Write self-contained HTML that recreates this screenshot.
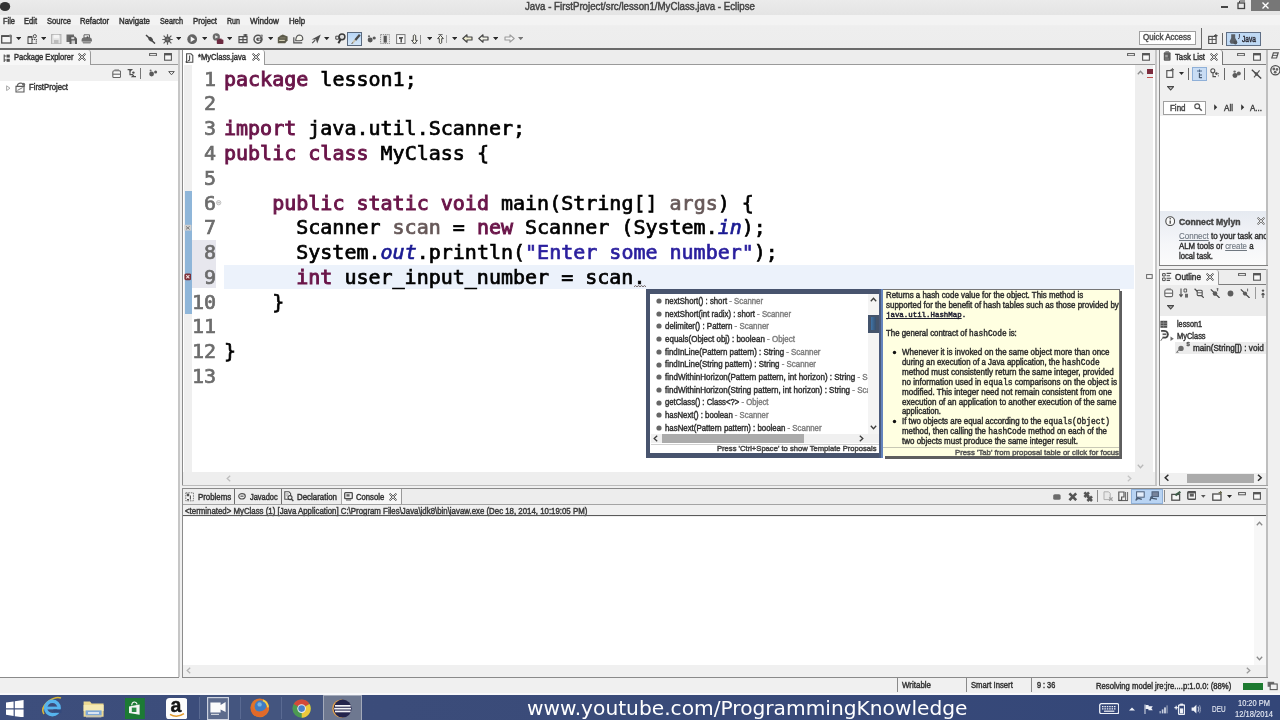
<!DOCTYPE html>
<html lang="en">
<head>
<meta charset="utf-8">
<title>Java - FirstProject/src/lesson1/MyClass.java - Eclipse</title>
<style>
html,body{margin:0;padding:0;}
body{width:1280px;height:720px;overflow:hidden;background:#f0f0f0;font-family:'Liberation Sans', 'DejaVu Sans', sans-serif;}
#root{will-change:transform;position:relative;width:1280px;height:720px;overflow:hidden;background:#f0f0f0;}
#root div,#root span.t,#root svg,#root pre{position:absolute;}
#root span.t{white-space:pre;-webkit-text-stroke:0.45px;}
#root pre{margin:0;}
pre.c{font-family:'DejaVu Sans Mono', 'Liberation Mono', monospace;font-size:20px;line-height:24.77px;color:#000;-webkit-text-stroke:0.7px #000;}
pre.n{width:36px;text-align:right;color:#6c6c6c;-webkit-text-stroke:0.7px #6c6c6c;}
.k{color:#6a1549;-webkit-text-stroke:0.95px #6a1549;}
.s{color:#2a1f9e;-webkit-text-stroke:0.7px #2a1f9e;}
.f{color:#1a1a92;font-style:italic;-webkit-text-stroke:0.7px #1a1a92;}
.v{color:#665858;-webkit-text-stroke:0.7px #665858;}
.g{color:#808080;}
.m{font-family:'Liberation Mono', 'DejaVu Sans Mono', monospace;}
</style>
</head>
<body>
<div id="root">
<div style="left:0px;top:0px;width:1280px;height:14.5px;background:linear-gradient(#ebebeb,#e4e4e4);"></div>
<div style="left:0px;top:14.5px;width:1280px;height:35.5px;background:linear-gradient(#f3f3f3 0%,#f3f3f3 27%,#eeeeee 31%,#ededed 100%);"></div>
<svg style="left:0px;top:1px;" width="11" height="11" viewBox="0 0 11 11"><ellipse cx="5" cy="5.5" rx="5.2" ry="4.6" fill="#333"/></svg>
<span id="t1" class="t" style="left:525px;top:0.2px;font-size:10px;line-height:14.0px;color:#444;transform:scaleX(0.9693);transform-origin:0 50%;">Java - FirstProject/src/lesson1/MyClass.java - Eclipse</span>
<div style="left:1250.5px;top:0px;width:29.5px;height:10.6px;background:#777;"></div>
<svg style="left:1261px;top:1px;" width="9" height="9" viewBox="0 0 9 9"><path d="M1.5 1.5L7.5 7.5M7.5 1.5L1.5 7.5" stroke="#fff" stroke-width="1.4"/></svg>
<div style="left:1221px;top:6px;width:7px;height:1.5px;background:#444;"></div>
<svg style="left:1237px;top:0px;" width="9" height="10" viewBox="0 0 9 10"><rect x="1" y="3" width="6.5" height="5.5" fill="none" stroke="#444" stroke-width="1.3"/><path d="M2.5 3V1H8" stroke="#444" fill="none" stroke-width="1"/></svg>
<span id="t2" class="t" style="left:3px;top:14.65px;font-size:8.8px;line-height:12.3px;color:#333333;transform:scaleX(0.8458);transform-origin:0 50%;">File</span>
<span id="t3" class="t" style="left:24px;top:14.65px;font-size:8.8px;line-height:12.3px;color:#333333;transform:scaleX(0.8568);transform-origin:0 50%;">Edit</span>
<span id="t4" class="t" style="left:47px;top:14.65px;font-size:8.8px;line-height:12.3px;color:#333333;transform:scaleX(0.861);transform-origin:0 50%;">Source</span>
<span id="t5" class="t" style="left:80px;top:14.65px;font-size:8.8px;line-height:12.3px;color:#333333;transform:scaleX(0.8722);transform-origin:0 50%;">Refactor</span>
<span id="t6" class="t" style="left:119px;top:14.65px;font-size:8.8px;line-height:12.3px;color:#333333;transform:scaleX(0.8925);transform-origin:0 50%;">Navigate</span>
<span id="t7" class="t" style="left:160px;top:14.65px;font-size:8.8px;line-height:12.3px;color:#333333;transform:scaleX(0.8251);transform-origin:0 50%;">Search</span>
<span id="t8" class="t" style="left:193px;top:14.65px;font-size:8.8px;line-height:12.3px;color:#333333;transform:scaleX(0.8762);transform-origin:0 50%;">Project</span>
<span id="t9" class="t" style="left:227px;top:14.65px;font-size:8.8px;line-height:12.3px;color:#333333;transform:scaleX(0.8054);transform-origin:0 50%;">Run</span>
<span id="t10" class="t" style="left:250px;top:14.65px;font-size:8.8px;line-height:12.3px;color:#333333;transform:scaleX(0.9266);transform-origin:0 50%;">Window</span>
<span id="t11" class="t" style="left:289px;top:14.65px;font-size:8.8px;line-height:12.3px;color:#333333;transform:scaleX(0.8843);transform-origin:0 50%;">Help</span>
<div style="left:0px;top:48px;width:1201px;height:2px;background:#6a6a6a;"></div>
<div style="left:1200.5px;top:27.5px;width:1.3px;height:22.5px;background:#6a6a6a;"></div>
<div style="left:1201px;top:48.9px;width:79px;height:1.2px;background:#7a7a7a;"></div>
<div style="left:1138.5px;top:31px;width:57.5px;height:13.5px;background:#fff;border:1px solid #a0a0a0;box-sizing:border-box;"></div>
<span id="t12" class="t" style="left:1143px;top:32.0px;font-size:8.4px;line-height:11.8px;color:#505050;transform:scaleX(0.9549);transform-origin:0 50%;">Quick Access</span>
<div style="left:1221.8px;top:33px;width:1.1px;height:12px;background:#666;"></div>
<div style="left:1225.8px;top:31.5px;width:35.4px;height:14.3px;background:#bfd9f4;border:1px solid #5f6f86;box-sizing:border-box;"></div>
<span id="t13" class="t" style="left:1242.3px;top:33.25px;font-size:8.8px;line-height:12.3px;color:#2e2e38;transform:scaleX(0.7476);transform-origin:0 50%;">Java</span>
<div style="left:0px;top:50px;width:179px;height:14.6px;background:#ededed;"></div>
<div style="left:0px;top:64px;width:179px;height:1px;background:#9a9a9a;"></div>
<div style="left:0px;top:50px;width:90px;height:15px;background:#f7f7f7;border-right:1px solid #999;border-radius:0 3px 0 0;"></div>
<span id="t14" class="t" style="left:13.6px;top:51.1px;font-size:8.8px;line-height:12.3px;color:#333333;transform:scaleX(0.8554);transform-origin:0 50%;">Package Explorer</span>
<div style="left:0px;top:65px;width:178px;height:15.5px;background:#f0f0f0;"></div>
<div style="left:0px;top:80.5px;width:178px;height:596.5px;background:#fff;"></div>
<div style="left:178.1px;top:50px;width:1.5px;height:627px;background:#c6c6c6;"></div>
<div style="left:0px;top:677px;width:179px;height:1px;background:#8a8a8a;"></div>
<span id="t15" class="t" style="left:29px;top:80.55px;font-size:8.8px;line-height:12.3px;color:#333333;transform:scaleX(0.8767);transform-origin:0 50%;">FirstProject</span>
<div style="left:182px;top:50px;width:974.8px;height:14.6px;background:#ededed;"></div>
<div style="left:182px;top:64px;width:974.8px;height:1px;background:#9a9a9a;"></div>
<div style="left:182px;top:50px;width:81.5px;height:15px;background:#fff;border-right:1px solid #999;border-radius:0 3px 0 0;"></div>
<span id="t16" class="t" style="left:198px;top:50.85px;font-size:8.8px;line-height:12.3px;color:#333333;transform:scaleX(0.8612);transform-origin:0 50%;">*MyClass.java</span>
<div style="left:182px;top:65px;width:974.8px;height:420px;background:#fff;"></div>
<div style="left:182px;top:50px;width:1px;height:436px;background:#8c8c8c;"></div>
<div style="left:1155.3px;top:50px;width:1.5px;height:436px;background:#c6c6c6;"></div>
<div style="left:182px;top:485px;width:974.8px;height:1px;background:#bcbcbc;"></div>
<div style="left:184px;top:65px;width:8px;height:407px;background:#efefef;"></div>
<div style="left:184.5px;top:190.5px;width:7.2px;height:123.5px;background:#8fb6d9;"></div>
<div style="left:191.7px;top:240px;width:24.3px;height:48px;background:#e7e7ee;"></div>
<div style="left:223.8px;top:264.6px;width:910.6px;height:24.3px;background:#ecf2fb;"></div>
<div style="left:1134.5px;top:65px;width:18.5px;height:420px;background:#eeeeee;"></div>
<div style="left:183px;top:472px;width:972px;height:13px;background:#eeeeee;"></div>
<div style="left:1147px;top:68.8px;width:5.5px;height:5.6px;background:#7c2b3c;"></div>
<div style="left:1146.5px;top:76.5px;width:6.5px;height:1px;background:#c0504d;"></div>
<pre class="c" style="left:224px;top:66.7px;"><span class="k">package</span> lesson1;</pre>
<pre class="c n" style="left:180px;top:66.7px;">1</pre>
<pre class="c n" style="left:180px;top:91.47px;">2</pre>
<pre class="c" style="left:224px;top:116.24px;"><span class="k">import</span> java.util.Scanner;</pre>
<pre class="c n" style="left:180px;top:116.24px;">3</pre>
<pre class="c" style="left:224px;top:141.01px;"><span class="k">public</span> <span class="k">class</span> MyClass {</pre>
<pre class="c n" style="left:180px;top:141.01px;">4</pre>
<pre class="c n" style="left:180px;top:165.78px;">5</pre>
<pre class="c" style="left:224px;top:190.55px;">    <span class="k">public</span> <span class="k">static</span> <span class="k">void</span> main(String[] <span class="v">args</span>) {</pre>
<pre class="c n" style="left:180px;top:190.55px;">6</pre>
<pre class="c" style="left:224px;top:215.32px;">      Scanner <span class="v">scan</span> = <span class="k">new</span> Scanner (System.<span class="f">in</span>);</pre>
<pre class="c n" style="left:180px;top:215.32px;">7</pre>
<pre class="c" style="left:224px;top:240.09px;">      System.<span class="f">out</span>.println(<span class="s">"Enter some number"</span>);</pre>
<pre class="c n" style="left:180px;top:240.09px;">8</pre>
<pre class="c" style="left:224px;top:264.86px;">      <span class="k">int</span> user_input_number = scan.</pre>
<pre class="c n" style="left:180px;top:264.86px;">9</pre>
<pre class="c" style="left:224px;top:289.63px;">    }</pre>
<pre class="c n" style="left:180px;top:289.63px;">10</pre>
<pre class="c n" style="left:180px;top:314.4px;">11</pre>
<pre class="c" style="left:224px;top:339.17px;">}</pre>
<pre class="c n" style="left:180px;top:339.17px;">12</pre>
<pre class="c n" style="left:180px;top:363.94px;">13</pre>
<div style="left:645.6px;top:289.0px;width:237.29999999999995px;height:168.7px;background:#48546e;"></div>
<div style="left:879px;top:289.0px;width:2px;height:168.7px;background:#4a5a7c;"></div>
<div style="left:881px;top:289.0px;width:1.9px;height:168.7px;background:#6484bc;"></div>
<div style="left:650.3px;top:293.9px;width:228.7px;height:159.1px;background:#fff;"></div>
<svg style="left:655.5px;top:298.0px;" width="6" height="6" viewBox="0 0 6 6"><circle cx="3" cy="3" r="2.6" fill="#666"/></svg>
<span id="t17" class="t" style="left:665px;top:294.85px;font-size:8.8px;line-height:12.3px;color:#333;transform:scaleX(0.8829);transform-origin:0 50%;">nextShort() : short<span class="g"> - Scanner</span></span>
<svg style="left:655.5px;top:310.7px;" width="6" height="6" viewBox="0 0 6 6"><circle cx="3" cy="3" r="2.6" fill="#666"/></svg>
<span id="t18" class="t" style="left:665px;top:307.55px;font-size:8.8px;line-height:12.3px;color:#333;transform:scaleX(0.8886);transform-origin:0 50%;">nextShort(int radix) : short<span class="g"> - Scanner</span></span>
<svg style="left:655.5px;top:323.4px;" width="6" height="6" viewBox="0 0 6 6"><circle cx="3" cy="3" r="2.6" fill="#666"/></svg>
<span id="t19" class="t" style="left:665px;top:320.25px;font-size:8.8px;line-height:12.3px;color:#333;transform:scaleX(0.9013);transform-origin:0 50%;">delimiter() : Pattern<span class="g"> - Scanner</span></span>
<svg style="left:655.5px;top:336.1px;" width="6" height="6" viewBox="0 0 6 6"><circle cx="3" cy="3" r="2.6" fill="#666"/></svg>
<span id="t20" class="t" style="left:665px;top:332.95px;font-size:8.8px;line-height:12.3px;color:#333;transform:scaleX(0.9073);transform-origin:0 50%;">equals(Object obj) : boolean<span class="g"> - Object</span></span>
<svg style="left:655.5px;top:348.8px;" width="6" height="6" viewBox="0 0 6 6"><circle cx="3" cy="3" r="2.6" fill="#666"/></svg>
<span id="t21" class="t" style="left:665px;top:345.65px;font-size:8.8px;line-height:12.3px;color:#333;transform:scaleX(0.8982);transform-origin:0 50%;">findInLine(Pattern pattern) : String<span class="g"> - Scanner</span></span>
<svg style="left:655.5px;top:361.5px;" width="6" height="6" viewBox="0 0 6 6"><circle cx="3" cy="3" r="2.6" fill="#666"/></svg>
<span id="t22" class="t" style="left:665px;top:358.35px;font-size:8.8px;line-height:12.3px;color:#333;transform:scaleX(0.9002);transform-origin:0 50%;">findInLine(String pattern) : String<span class="g"> - Scanner</span></span>
<svg style="left:655.5px;top:374.2px;" width="6" height="6" viewBox="0 0 6 6"><circle cx="3" cy="3" r="2.6" fill="#666"/></svg>
<span id="t23" class="t" style="left:665px;top:371.05px;font-size:8.8px;line-height:12.3px;color:#333;transform:scaleX(0.9111);transform-origin:0 50%;">findWithinHorizon(Pattern pattern, int horizon) : String<span class="g"> - Scanner</span></span>
<svg style="left:655.5px;top:386.9px;" width="6" height="6" viewBox="0 0 6 6"><circle cx="3" cy="3" r="2.6" fill="#666"/></svg>
<span id="t24" class="t" style="left:665px;top:383.75px;font-size:8.8px;line-height:12.3px;color:#333;transform:scaleX(0.9097);transform-origin:0 50%;">findWithinHorizon(String pattern, int horizon) : String<span class="g"> - Scanner</span></span>
<svg style="left:655.5px;top:399.6px;" width="6" height="6" viewBox="0 0 6 6"><circle cx="3" cy="3" r="2.6" fill="#666"/></svg>
<span id="t25" class="t" style="left:665px;top:396.45px;font-size:8.8px;line-height:12.3px;color:#333;transform:scaleX(0.8783);transform-origin:0 50%;">getClass() : Class&lt;?&gt;<span class="g"> - Object</span></span>
<svg style="left:655.5px;top:412.3px;" width="6" height="6" viewBox="0 0 6 6"><circle cx="3" cy="3" r="2.6" fill="#666"/></svg>
<span id="t26" class="t" style="left:665px;top:409.15px;font-size:8.8px;line-height:12.3px;color:#333;transform:scaleX(0.8818);transform-origin:0 50%;">hasNext() : boolean<span class="g"> - Scanner</span></span>
<svg style="left:655.5px;top:425.0px;" width="6" height="6" viewBox="0 0 6 6"><circle cx="3" cy="3" r="2.6" fill="#666"/></svg>
<span id="t27" class="t" style="left:665px;top:421.85px;font-size:8.8px;line-height:12.3px;color:#333;transform:scaleX(0.892);transform-origin:0 50%;">hasNext(Pattern pattern) : boolean<span class="g"> - Scanner</span></span>
<div style="left:879px;top:289.0px;width:2px;height:168.7px;background:#4a5a7c;"></div>
<div style="left:881px;top:289.0px;width:1.9px;height:168.7px;background:#6484bc;"></div>
<div style="left:868px;top:293.8px;width:10.8px;height:140px;background:#f4f4f4;"></div>
<div style="left:868px;top:315px;width:10.5px;height:17.5px;background:#44546c;"></div>
<div style="left:650.6px;top:433.8px;width:228.2px;height:9.4px;background:#f0f0f0;"></div>
<div style="left:662px;top:434.2px;width:142px;height:8.4px;background:#ababab;"></div>
<div style="left:650.6px;top:444.3px;width:228.2px;height:1px;background:#d0d0d0;"></div>
<span id="t28" class="t" style="left:717px;top:444.0px;font-size:7.6px;line-height:10.6px;color:#444;transform:scaleX(1.0023);transform-origin:0 50%;">Press 'Ctrl+Space' to show Template Proposals</span>
<div style="left:884.5px;top:291px;width:237px;height:168px;background:#5e5e5e;"></div>
<div style="left:882.6px;top:289.3px;width:237px;height:167px;background:#ffffe1;border-top:1px solid #767676;box-sizing:border-box;"></div>
<div style="left:1119px;top:289.3px;width:1px;height:167.0px;background:#767676;"></div>
<span id="t29" class="t" style="left:885.9px;top:289.15px;font-size:8.8px;line-height:12.3px;color:#2e2e2e;transform:scaleX(0.8964);transform-origin:0 50%;">Returns a hash code value for the object. This method is</span>
<span id="t30" class="t" style="left:885.9px;top:299.35px;font-size:8.8px;line-height:12.3px;color:#2e2e2e;transform:scaleX(0.905);transform-origin:0 50%;">supported for the benefit of hash tables such as those provided by</span>
<span id="t31" class="t" style="left:885.9px;top:327.35px;font-size:8.8px;line-height:12.3px;color:#2e2e2e;transform:scaleX(0.8934);transform-origin:0 50%;">The general contract of <span class="m">hashCode</span> is:</span>
<span id="t32" class="t" style="left:902px;top:346.25px;font-size:8.8px;line-height:12.3px;color:#2e2e2e;transform:scaleX(0.9067);transform-origin:0 50%;">Whenever it is invoked on the same object more than once</span>
<span id="t33" class="t" style="left:902px;top:356.05px;font-size:8.8px;line-height:12.3px;color:#2e2e2e;transform:scaleX(0.8936);transform-origin:0 50%;">during an execution of a Java application, the <span class="m">hashCode</span></span>
<span id="t34" class="t" style="left:902px;top:365.95px;font-size:8.8px;line-height:12.3px;color:#2e2e2e;transform:scaleX(0.9177);transform-origin:0 50%;">method must consistently return the same integer, provided</span>
<span id="t35" class="t" style="left:902px;top:375.85px;font-size:8.8px;line-height:12.3px;color:#2e2e2e;transform:scaleX(0.9164);transform-origin:0 50%;">no information used in <span class="m">equals</span> comparisons on the object is</span>
<span id="t36" class="t" style="left:902px;top:385.75px;font-size:8.8px;line-height:12.3px;color:#2e2e2e;transform:scaleX(0.9163);transform-origin:0 50%;">modified. This integer need not remain consistent from one</span>
<span id="t37" class="t" style="left:902px;top:395.65px;font-size:8.8px;line-height:12.3px;color:#2e2e2e;transform:scaleX(0.9137);transform-origin:0 50%;">execution of an application to another execution of the same</span>
<span id="t38" class="t" style="left:902px;top:405.45px;font-size:8.8px;line-height:12.3px;color:#2e2e2e;transform:scaleX(0.8761);transform-origin:0 50%;">application.</span>
<span id="t39" class="t" style="left:902px;top:415.35px;font-size:8.8px;line-height:12.3px;color:#2e2e2e;transform:scaleX(0.8971);transform-origin:0 50%;">If two objects are equal according to the <span class="m">equals(Object)</span></span>
<span id="t40" class="t" style="left:902px;top:425.35px;font-size:8.8px;line-height:12.3px;color:#2e2e2e;transform:scaleX(0.8988);transform-origin:0 50%;">method, then calling the <span class="m">hashCode</span> method on each of the</span>
<span id="t41" class="t" style="left:902px;top:435.15px;font-size:8.8px;line-height:12.3px;color:#2e2e2e;transform:scaleX(0.9066);transform-origin:0 50%;">two objects must produce the same integer result.</span>
<span id="t42" class="t" style="left:885.9px;top:310.4px;font-size:7.6px;line-height:10.6px;color:#223;font-family:'Liberation Mono', 'DejaVu Sans Mono', monospace;transform:scaleX(0.9763);transform-origin:0 50%;"><span style="text-decoration:underline">java.util.HashMap</span>.</span>
<svg style="left:891.5px;top:350.2px;" width="5" height="5" viewBox="0 0 5 5"><circle cx="2.5" cy="2.5" r="1.7" fill="#111"/></svg>
<svg style="left:891.5px;top:419.3px;" width="5" height="5" viewBox="0 0 5 5"><circle cx="2.5" cy="2.5" r="1.7" fill="#111"/></svg>
<div style="left:883px;top:447px;width:236px;height:1px;background:#c8c8b4;"></div>
<span id="t43" class="t" style="left:954.5px;top:448.2px;font-size:7.6px;line-height:10.6px;color:#555;transform:scaleX(1.0202);transform-origin:0 50%;">Press 'Tab' from proposal table or click for focus</span>
<div style="left:1159px;top:50px;width:108.90000000000009px;height:14.6px;background:#ededed;"></div>
<div style="left:1159px;top:64px;width:108.9px;height:1px;background:#7e7e7e;"></div>
<div style="left:1159px;top:50px;width:63.2px;height:15px;background:#f7f7f7;border-right:1px solid #777;border-radius:0 3px 0 0;"></div>
<span id="t44" class="t" style="left:1175px;top:51.35px;font-size:8.8px;line-height:12.3px;color:#333333;transform:scaleX(0.8763);transform-origin:0 50%;">Task List</span>
<div style="left:1159px;top:65px;width:108.90000000000009px;height:51px;background:#f0f0f0;"></div>
<div style="left:1159px;top:116px;width:108.90000000000009px;height:95px;background:#fff;"></div>
<div style="left:1159px;top:211px;width:108.90000000000009px;height:54px;background:linear-gradient(#e6eaf1,#f5f6f9 60%,#fbfbfb);"></div>
<div style="left:1159px;top:50px;width:1px;height:216px;background:#8c8c8c;"></div>
<div style="left:1266.3px;top:50px;width:1.6px;height:216px;background:#bebebe;"></div>
<div style="left:1159px;top:265px;width:108.9px;height:1px;background:#808080;"></div>
<div style="left:1192px;top:67px;width:14.5px;height:13.5px;background:#c9ddf4;border:1px solid #8fb0d8;box-sizing:border-box;"></div>
<div style="left:1187.6px;top:67.5px;width:1.3px;height:12.5px;background:#686868;"></div>
<div style="left:1223.8px;top:67.5px;width:1.3px;height:12.5px;background:#686868;"></div>
<div style="left:1244.2px;top:67.5px;width:1.3px;height:12.5px;background:#686868;"></div>
<div style="left:1163px;top:101px;width:42.5px;height:13.5px;background:#fff;border:1px solid #a0a0a0;box-sizing:border-box;"></div>
<span id="t45" class="t" style="left:1170px;top:101.65px;font-size:8.8px;line-height:12.3px;color:#444;transform:scaleX(0.9051);transform-origin:0 50%;">Find</span>
<span id="t46" class="t" style="left:1224px;top:101.65px;font-size:8.8px;line-height:12.3px;color:#444;transform:scaleX(0.9201);transform-origin:0 50%;">All</span>
<span id="t47" class="t" style="left:1250px;top:101.65px;font-size:8.8px;line-height:12.3px;color:#444;transform:scaleX(0.9089);transform-origin:0 50%;">A...</span>
<span id="t48" class="t" style="left:1178.5px;top:214.6px;font-size:9.6px;line-height:13.4px;color:#444;font-weight:bold;transform:scaleX(0.9013);transform-origin:0 50%;">Connect Mylyn</span>
<span id="t49" class="t" style="left:1178.5px;top:230.05px;font-size:8.8px;line-height:12.3px;color:#333;transform:scaleX(0.9068);transform-origin:0 50%;"><span style="text-decoration:underline;color:#6f7780;-webkit-text-stroke:0.15px">Connect</span> to your task and</span>
<div style="left:1266.3px;top:228px;width:1.6px;height:14px;background:#bebebe;"></div>
<div style="left:1267.9px;top:228px;width:0.7px;height:14px;background:#f0f0f0;"></div>
<span id="t50" class="t" style="left:1178.5px;top:240.05px;font-size:8.8px;line-height:12.3px;color:#333;transform:scaleX(0.8909);transform-origin:0 50%;">ALM tools or <span style="text-decoration:underline;color:#6f7780;-webkit-text-stroke:0.15px">create</span> a</span>
<span id="t51" class="t" style="left:1178.5px;top:249.55px;font-size:8.8px;line-height:12.3px;color:#333;transform:scaleX(0.869);transform-origin:0 50%;">local task.</span>
<div style="left:1159px;top:268.8px;width:108.90000000000009px;height:15px;background:#ededed;"></div>
<div style="left:1159px;top:268.8px;width:108.9px;height:1px;background:#8a8a8a;"></div>
<div style="left:1159px;top:284px;width:108.9px;height:1px;background:#7c7c7c;"></div>
<div style="left:1159px;top:269.5px;width:58.5px;height:15px;background:#f7f7f7;border-right:1px solid #999;border-radius:0 3px 0 0;"></div>
<span id="t52" class="t" style="left:1175px;top:270.6px;font-size:8.8px;line-height:12.3px;color:#333333;transform:scaleX(0.9327);transform-origin:0 50%;">Outline</span>
<div style="left:1159px;top:284.5px;width:108.90000000000009px;height:31.5px;background:#ececec;"></div>
<div style="left:1159px;top:316px;width:108.90000000000009px;height:156.5px;background:#fff;"></div>
<div style="left:1159px;top:472.5px;width:108.90000000000009px;height:12.5px;background:#f0f0f0;"></div>
<div style="left:1187px;top:473.5px;width:66.8px;height:9.5px;background:#ababab;"></div>
<div style="left:1159px;top:268.8px;width:1px;height:217.2px;background:#8c8c8c;"></div>
<div style="left:1266.3px;top:268.8px;width:1.6px;height:217.2px;background:#bebebe;"></div>
<div style="left:1159px;top:485px;width:108.9px;height:1px;background:#a0a0a0;"></div>
<div style="left:1175px;top:342px;width:90.5px;height:11.8px;background:#ececec;"></div>
<span id="t53" class="t" style="left:1177px;top:317.65px;font-size:8.8px;line-height:12.3px;color:#333333;transform:scaleX(0.8243);transform-origin:0 50%;">lesson1</span>
<span id="t54" class="t" style="left:1177px;top:329.55px;font-size:8.8px;line-height:12.3px;color:#333333;transform:scaleX(0.8478);transform-origin:0 50%;">MyClass</span>
<span id="t55" class="t" style="left:1193px;top:341.85px;font-size:8.8px;line-height:12.3px;color:#333333;transform:scaleX(0.9283);transform-origin:0 50%;">main(String[]) : void</span>
<div style="left:1255px;top:287px;width:1px;height:12px;background:#999;"></div>
<div style="left:182px;top:488px;width:1085.9px;height:16px;background:#ededed;"></div>
<div style="left:182px;top:488px;width:1085.9px;height:1px;background:#8a8a8a;"></div>
<div style="left:182px;top:503.5px;width:1085.9px;height:1px;background:#a4a4a4;"></div>
<div style="left:340.5px;top:488.8px;width:61px;height:15.2px;background:#f7f7f7;border-right:1px solid #999;border-left:1px solid #aaa;box-sizing:border-box;"></div>
<div style="left:234px;top:489px;width:1px;height:14.6px;background:#6e6e6e;"></div>
<div style="left:281px;top:489px;width:1px;height:14.6px;background:#6e6e6e;"></div>
<span id="t56" class="t" style="left:197.8px;top:490.9px;font-size:8.8px;line-height:12.3px;color:#333333;transform:scaleX(0.8935);transform-origin:0 50%;">Problems</span>
<span id="t57" class="t" style="left:250.3px;top:490.9px;font-size:8.8px;line-height:12.3px;color:#333333;transform:scaleX(0.8454);transform-origin:0 50%;">Javadoc</span>
<span id="t58" class="t" style="left:296.7px;top:490.9px;font-size:8.8px;line-height:12.3px;color:#333333;transform:scaleX(0.8989);transform-origin:0 50%;">Declaration</span>
<span id="t59" class="t" style="left:356.3px;top:490.9px;font-size:8.8px;line-height:12.3px;color:#333333;transform:scaleX(0.8736);transform-origin:0 50%;">Console</span>
<div style="left:182px;top:504.5px;width:1085.9px;height:11px;background:#f0f0f0;"></div>
<span id="t60" class="t" style="left:184.7px;top:504.5px;font-size:8.6px;line-height:12.0px;color:#3a3a3a;transform:scaleX(0.9135);transform-origin:0 50%;">&lt;terminated&gt; MyClass (1) [Java Application] C:\Program Files\Java\jdk8\bin\javaw.exe (Dec 18, 2014, 10:19:05 PM)</span>
<div style="left:182px;top:515.1px;width:1083.5px;height:1.2px;background:#5a5a5a;"></div>
<div style="left:182px;top:516.6px;width:1085.9px;height:148px;background:#fff;"></div>
<div style="left:182px;top:664.5px;width:1085.9px;height:12.5px;background:#f0f0f0;"></div>
<div style="left:1253.5px;top:516.6px;width:13px;height:148px;background:#f7f7f7;"></div>
<div style="left:182px;top:488px;width:1px;height:190px;background:#8c8c8c;"></div>
<div style="left:1266.3px;top:488px;width:1.6px;height:190px;background:#bebebe;"></div>
<div style="left:182px;top:677px;width:1085.9px;height:1px;background:#8a8a8a;"></div>
<div style="left:1131px;top:489px;width:31.5px;height:14.6px;background:#b9d4f3;border:1px solid #8fb0d8;box-sizing:border-box;"></div>
<div style="left:1097px;top:490px;width:1px;height:12px;background:#8a8a8a;"></div>
<div style="left:1268.5px;top:50.1px;width:11.5px;height:644.5px;background:#f0f0f0;"></div>
<div style="left:0px;top:678px;width:1280px;height:17px;background:#f0f0f0;"></div>
<div style="left:896.5px;top:678px;width:1px;height:14px;background:#8a8a8a;"></div>
<div style="left:965.7px;top:678px;width:1px;height:14px;background:#8a8a8a;"></div>
<div style="left:1031px;top:678px;width:1px;height:14px;background:#8a8a8a;"></div>
<span id="t61" class="t" style="left:901.6px;top:679.05px;font-size:8.8px;line-height:12.3px;color:#333333;transform:scaleX(0.9032);transform-origin:0 50%;">Writable</span>
<span id="t62" class="t" style="left:971px;top:679.05px;font-size:8.8px;line-height:12.3px;color:#333333;transform:scaleX(0.8725);transform-origin:0 50%;">Smart Insert</span>
<span id="t63" class="t" style="left:1036.7px;top:679.05px;font-size:8.8px;line-height:12.3px;color:#333333;transform:scaleX(0.8267);transform-origin:0 50%;">9 : 36</span>
<span id="t64" class="t" style="left:1095.7px;top:680.35px;font-size:8.8px;line-height:12.3px;color:#333;transform:scaleX(0.8756);transform-origin:0 50%;">Resolving model jre:jre....p:1.0.0: (88%)</span>
<div style="left:1243px;top:683px;width:19.5px;height:6.5px;background:#1d7a30;"></div>
<div style="left:0px;top:692.6px;width:1280px;height:2.2px;background:#f8f8fa;"></div>
<div style="left:0px;top:694.7px;width:1280px;height:25.3px;background:linear-gradient(90deg,#3d4e7c 0%,#3a4b79 45%,#334678 100%);"></div>
<div style="left:200px;top:695px;width:123px;height:25px;background:#44557f;"></div>
<span id="t65" class="t" style="left:527px;top:693.65px;font-size:20.2px;line-height:28.3px;color:#fff;font-family:'DejaVu Sans', 'Liberation Sans', sans-serif;transform:scaleX(1.0);transform-origin:0 50%;-webkit-text-stroke:0;">www.youtube.com/ProgrammingKnowledge</span>
<span id="t66" class="t" style="left:1211.7px;top:702.8px;font-size:8.6px;line-height:12.0px;color:#e8ecf5;transform:scaleX(0.7491);transform-origin:0 50%;-webkit-text-stroke:0.12px;">DEU</span>
<span id="t67" class="t" style="left:1238.4px;top:697.9px;font-size:8.4px;line-height:11.8px;color:#e8ecf5;transform:scaleX(0.8896);transform-origin:0 50%;-webkit-text-stroke:0.12px;">10:20 PM</span>
<span id="t68" class="t" style="left:1235px;top:708.7px;font-size:8.4px;line-height:11.8px;color:#e8ecf5;transform:scaleX(0.9064);transform-origin:0 50%;-webkit-text-stroke:0.12px;">12/18/2014</span>
<svg style="left:1px;top:34.1px;" width="11" height="10" viewBox="0 0 11 10"><rect x="0.7" y="2" width="9.3" height="7" fill="#f4f4f4" stroke="#505050" stroke-width="1.3"/><rect x="0.3" y="1.2" width="10" height="1.8" fill="#505050"/><circle cx="9.3" cy="2" r="1.4" fill="#777"/></svg>
<svg style="left:15.7px;top:36.8px;" width="5.4" height="3.2" viewBox="0 0 5.4 3.2"><path d="M0 0H5.4L2.7 3.2Z" fill="#2a2a2a"/></svg>
<svg style="left:26.5px;top:33.6px;" width="10" height="10.5" viewBox="0 0 10 10.5"><path d="M1 3H5V9.5H1Z" fill="none" stroke="#505050" stroke-width="1.1"/><path d="M5 5.5H9.3V9.5H5" fill="none" stroke="#505050" stroke-width="1.1" stroke-dasharray="1.2 0.8"/><circle cx="7.8" cy="2.2" r="1.6" fill="none" stroke="#505050" stroke-width="1"/><rect x="1" y="2" width="4" height="1.6" fill="#505050"/></svg>
<svg style="left:40.7px;top:36.8px;" width="5.4" height="3.2" viewBox="0 0 5.4 3.2"><path d="M0 0H5.4L2.7 3.2Z" fill="#2a2a2a"/></svg>
<svg style="left:51px;top:33.6px;" width="10.5" height="10.5" viewBox="0 0 10.5 10.5"><rect x="0.6" y="0.6" width="9.3" height="9.3" fill="#e2e2e2" stroke="#b4b4b4" stroke-width="1.1"/><rect x="2.5" y="0.8" width="5.5" height="3.5" fill="#f4f4f4"/><rect x="3" y="6" width="4.5" height="4" fill="#bcbcbc"/></svg>
<svg style="left:66px;top:33.6px;" width="11.5" height="10.5" viewBox="0 0 11.5 10.5"><rect x="0.5" y="0.5" width="7.5" height="7.5" fill="#6a6a6a"/><path d="M3.5 2.5H9L11 4.5V10H3.5Z" fill="#5a5a5a"/><rect x="5.5" y="6.5" width="3.5" height="3.5" fill="#cfcfcf"/><rect x="5.3" y="3.2" width="3" height="2" fill="#ddd"/></svg>
<svg style="left:81px;top:34.1px;" width="11.5" height="10" viewBox="0 0 11.5 10"><path d="M3 0.8H8.5V4H3Z" fill="#f0f0f0" stroke="#666" stroke-width="1"/><path d="M0.6 6.2Q0.6 3.6 3 3.6H8.5Q10.9 3.6 10.9 6.2V7.4H0.6Z" fill="#707070"/><path d="M1.2 7.4H10.3L9.4 9.5H2.1Z" fill="#8a8a8a"/><circle cx="6.5" cy="3.3" r="1" fill="#555"/></svg>
<svg style="left:145px;top:33.6px;" width="11" height="10.5" viewBox="0 0 11 10.5"><path d="M1 1L10 9.6" stroke="#444" stroke-width="1.5"/><ellipse cx="5.6" cy="5.2" rx="2.6" ry="1.9" transform="rotate(42 5.6 5.2)" fill="#4a4a4a"/></svg>
<svg style="left:161.5px;top:33.6px;" width="11" height="11" viewBox="0 0 11 11"><circle cx="5.5" cy="5.5" r="3" fill="#555"/><path d="M5.5 0.3V10.7M0.3 5.5H10.7M1.6 1.6L9.4 9.4M9.4 1.6L1.6 9.4" stroke="#5a5a5a" stroke-width="1.2"/><circle cx="5.5" cy="5.5" r="1.1" fill="#8a8a8a"/></svg>
<svg style="left:176.0px;top:37.0px;" width="5.4" height="3.2" viewBox="0 0 5.4 3.2"><path d="M0 0H5.4L2.7 3.2Z" fill="#2a2a2a"/></svg>
<svg style="left:186.8px;top:33.6px;" width="10.4" height="10.4" viewBox="0 0 10.4 10.4"><circle cx="5.2" cy="5.2" r="4.9" fill="#646464"/><path d="M3.7 2.5L8 5.2L3.7 7.9Z" fill="#fafafa"/></svg>
<svg style="left:201.6px;top:37.0px;" width="5.4" height="3.2" viewBox="0 0 5.4 3.2"><path d="M0 0H5.4L2.7 3.2Z" fill="#2a2a2a"/></svg>
<svg style="left:212px;top:32.6px;" width="12" height="12" viewBox="0 0 12 12"><circle cx="4.3" cy="3.9" r="3.6" fill="#6a6a6a"/><path d="M3.2 2.2L6.3 3.9L3.2 5.6Z" fill="#e8e8e8"/><rect x="4.8" y="6.6" width="6.6" height="4.4" rx="0.8" fill="#6c2a40"/><rect x="6.6" y="5.6" width="3" height="1.4" fill="#6c2a40"/></svg>
<svg style="left:226.8px;top:37.0px;" width="5.4" height="3.2" viewBox="0 0 5.4 3.2"><path d="M0 0H5.4L2.7 3.2Z" fill="#2a2a2a"/></svg>
<svg style="left:237.5px;top:34.4px;" width="10" height="9.2" viewBox="0 0 10 9.2"><path d="M1 2.6H9V8.6H1Z" fill="none" stroke="#505050" stroke-width="1.2"/><path d="M5 2.6V8.6M1 5.6H9" stroke="#505050" stroke-width="1.2"/><path d="M5.5 1H9.3" stroke="#505050" stroke-width="1.6"/><path d="M7.4 0V3" stroke="#505050" stroke-width="1.1"/></svg>
<svg style="left:253px;top:34.2px;" width="10.4" height="10.2" viewBox="0 0 10.4 10.2"><circle cx="5" cy="5.2" r="4.7" fill="#555"/><path d="M6.9 3.6A2.5 2.5 0 1 0 6.9 6.8" fill="none" stroke="#f2f2f2" stroke-width="1.5"/><path d="M5.4 5.2H7.6" stroke="#f2f2f2" stroke-width="1.1"/><circle cx="8.6" cy="1.8" r="1.4" fill="#8a8a8a"/></svg>
<svg style="left:267.9px;top:37.0px;" width="5.4" height="3.2" viewBox="0 0 5.4 3.2"><path d="M0 0H5.4L2.7 3.2Z" fill="#2a2a2a"/></svg>
<svg style="left:277px;top:33.6px;" width="11.5" height="10" viewBox="0 0 11.5 10"><path d="M0.8 3.6L4.2 1.2L5.8 0.6L10.6 2.6V6.2L8.2 9.2H0.8Z" fill="#5c5a4a"/><path d="M2.2 6.4H7.8" stroke="#d8d4b8" stroke-width="1.1"/><path d="M3.2 3.9H8.6" stroke="#87846e" stroke-width="1"/></svg>
<svg style="left:293px;top:34.1px;" width="10.5" height="9.6" viewBox="0 0 10.5 9.6"><path d="M0.8 3.2V8.8H9.2" fill="none" stroke="#505050" stroke-width="1.2"/><path d="M2.8 5.6Q3.4 1 6.6 1Q9.8 1.4 9.8 5.2Q9 6.9 6.2 6.8H2.8Z" fill="#f2f2ea" stroke="#505050" stroke-width="1.1"/></svg>
<svg style="left:310.5px;top:33.6px;" width="10.4" height="10" viewBox="0 0 10.4 10"><path d="M9.8 0.4L6.2 9.4L5 5.6L0.6 5.4Z" fill="#505050"/><path d="M1.2 9.2L4.2 6.2" stroke="#505050" stroke-width="1.2"/></svg>
<svg style="left:324.3px;top:37.0px;" width="5.4" height="3.2" viewBox="0 0 5.4 3.2"><path d="M0 0H5.4L2.7 3.2Z" fill="#2a2a2a"/></svg>
<svg style="left:334.5px;top:33.2px;" width="11" height="11" viewBox="0 0 11 11"><path d="M0.8 3.2H3.8V6.2H0.8Z" fill="#f0f0f0" stroke="#444" stroke-width="1"/><circle cx="7" cy="3.8" r="2.9" fill="#dedede" stroke="#3c3c3c" stroke-width="1.5"/><path d="M5.6 6.2L3.4 10.2" stroke="#333" stroke-width="2"/></svg>
<div style="left:347.3px;top:32.1px;width:15.2px;height:13.6px;background:linear-gradient(#b8d6f6,#d3e6f8);border:1px solid #59697e;box-sizing:border-box;"></div>
<svg style="left:350.5px;top:33.8px;" width="10.5" height="10.5" viewBox="0 0 10.5 10.5"><path d="M1.2 9.6L4.6 5.4" stroke="#c9c2ae" stroke-width="1.7"/><path d="M4.4 6L8.8 0.8" stroke="#4c4c4c" stroke-width="2.3"/><path d="M0.6 10.2L1.6 8.4" stroke="#666" stroke-width="1"/></svg>
<svg style="left:366px;top:35.0px;" width="10.5" height="8.4" viewBox="0 0 10.5 8.4"><circle cx="4.2" cy="5" r="2.5" fill="#575757"/><circle cx="8.2" cy="3" r="1.6" fill="#5a5a5a"/><circle cx="3" cy="1.3" r="1.1" fill="#6a6a6a"/></svg>
<svg style="left:380px;top:33.8px;" width="10.4" height="10.2" viewBox="0 0 10.4 10.2"><rect x="0.6" y="0.6" width="9.2" height="9" fill="#e6e6e6" stroke="#8c8c8c" stroke-width="1" stroke-dasharray="1.4 0.8"/><rect x="3.6" y="1.8" width="3.2" height="6.8" fill="#555"/></svg>
<svg style="left:396px;top:33.8px;" width="9.6" height="10.2" viewBox="0 0 9.6 10.2"><rect x="0.6" y="0.6" width="8.4" height="9" fill="#f6f6f6" stroke="#777" stroke-width="1"/><path d="M3 3H7V4.4H6V8.4H4.4V5H3Z" fill="#555"/></svg>
<svg style="left:410.6px;top:33.6px;" width="7" height="10.5" viewBox="0 0 7 10.5"><path d="M3.5 9.8L0.6 6.4H2.3V1.6Q3.5 0 4.7 1.6V6.4H6.4Z" fill="#f4f4e6" stroke="#484848" stroke-width="1"/><path d="M1.4 10H5.6" stroke="#555" stroke-width="0.9"/></svg>
<div style="left:420px;top:34.6px;width:1px;height:9px;background:#8c8c8c;"></div>
<svg style="left:426.5px;top:36.8px;" width="5.4" height="3.2" viewBox="0 0 5.4 3.2"><path d="M0 0H5.4L2.7 3.2Z" fill="#2a2a2a"/></svg>
<svg style="left:436.6px;top:34.0px;" width="7" height="10.2" viewBox="0 0 7 10.2"><path d="M3.5 1.4L0.6 4.6H2.3V8.8Q3.5 10.2 4.7 8.8V4.6H6.4Z" fill="#f4f4e6" stroke="#484848" stroke-width="1"/><path d="M1.4 0.6H5.6" stroke="#555" stroke-width="0.9"/></svg>
<div style="left:445.5px;top:34.6px;width:1px;height:8px;background:#aaa;"></div>
<svg style="left:451.8px;top:36.8px;" width="5.4" height="3.2" viewBox="0 0 5.4 3.2"><path d="M0 0H5.4L2.7 3.2Z" fill="#2a2a2a"/></svg>
<svg style="left:461.5px;top:34.2px;" width="11" height="9" viewBox="0 0 11 9"><path d="M0.8 4.5L5 0.8V3H10V6H5V8.2Z" fill="#f0eed2" stroke="#444" stroke-width="1.15" stroke-linejoin="round"/></svg>
<svg style="left:477.5px;top:34.2px;" width="11" height="9" viewBox="0 0 11 9"><path d="M0.8 4.5L5 0.8V3H10V6H5V8.2Z" fill="#f4f4ea" stroke="#444" stroke-width="1.15" stroke-linejoin="round"/></svg>
<svg style="left:492.8px;top:36.8px;" width="5.4" height="3.2" viewBox="0 0 5.4 3.2"><path d="M0 0H5.4L2.7 3.2Z" fill="#2a2a2a"/></svg>
<svg style="left:503.5px;top:34.2px;" width="11" height="9" viewBox="0 0 11 9"><path d="M10.2 4.5L6 0.8V3H1V6H6V8.2Z" fill="#f4f4f4" stroke="#9a9a9a" stroke-width="1.1" stroke-linejoin="round"/></svg>
<svg style="left:518.0px;top:36.8px;" width="5.4" height="3.2" viewBox="0 0 5.4 3.2"><path d="M0 0H5.4L2.7 3.2Z" fill="#777"/></svg>
<svg style="left:1207.5px;top:33.6px;" width="10" height="10.5" viewBox="0 0 10 10.5"><rect x="0.7" y="2.4" width="7.4" height="7.2" fill="#f4f4f4" stroke="#505050" stroke-width="1.2"/><path d="M0.7 5.4H8M4.2 2.4V9.6" stroke="#505050" stroke-width="1"/><path d="M6 1.6H9.6M7.8 0V3.4" stroke="#505050" stroke-width="1.1"/></svg>
<svg style="left:1229px;top:33.2px;" width="13" height="12" viewBox="0 0 13 12"><path d="M2.2 1.2H6.2V5L8.2 8.4L6.6 10.8H1.8L0.6 8.4L2.2 5Z" fill="#5a5f66"/><circle cx="6.4" cy="9.6" r="1.9" fill="#4d5257"/><path d="M10.4 1V4.6Q10.2 6 9 5.6" fill="none" stroke="#445" stroke-width="1"/></svg>
<svg style="left:2.5px;top:53.6px;" width="7.6" height="8.6" viewBox="0 0 7.6 8.6"><path d="M1.2 0.6V8M1.2 2H3.4M1.2 6H3.4" stroke="#505050" stroke-width="1.1" fill="none"/><rect x="3.6" y="0.6" width="3.2" height="3" fill="#505050"/><rect x="3.6" y="4.8" width="3.2" height="3" fill="#505050"/></svg>
<svg style="left:78px;top:53.3px;" width="8" height="8" viewBox="0 0 8 8"><path d="M1.3 0.4L4 3.1L6.7 0.4L7.6 1.3L4.9 4L7.6 6.7L6.7 7.6L4 4.9L1.3 7.6L0.4 6.7L3.1 4L0.4 1.3Z" fill="#f6f6f6" stroke="#4c4c4c" stroke-width="0.95" stroke-linejoin="round"/></svg>
<svg style="left:148.6px;top:52.8px;" width="8" height="3.4" viewBox="0 0 8 3.4"><rect x="0.6" y="0.6" width="6.8" height="2.2" fill="#f8f8f8" stroke="#555" stroke-width="1"/></svg>
<svg style="left:164.2px;top:52.8px;" width="8" height="8" viewBox="0 0 8 8"><rect x="0.6" y="0.6" width="6.8" height="6.6" fill="#f8f8f8" stroke="#555" stroke-width="1.1"/><rect x="0.6" y="0.4" width="6.8" height="2" fill="#555"/></svg>
<svg style="left:111.5px;top:68.6px;" width="9.4" height="9.4" viewBox="0 0 9.4 9.4"><rect x="0.8" y="1.8" width="7.8" height="6.8" rx="1.4" fill="#f8f8f8" stroke="#666" stroke-width="1.1"/><path d="M0.8 5.2H8.6" stroke="#666" stroke-width="1.1"/><path d="M2.4 0.8H7" stroke="#888" stroke-width="0.9"/></svg>
<svg style="left:126.5px;top:68px;" width="9.6" height="10.4" viewBox="0 0 9.6 10.4"><path d="M0.6 1.6H4.6L2.8 3.4" fill="none" stroke="#505050" stroke-width="1.2"/><path d="M3 2V6.6H6" fill="none" stroke="#505050" stroke-width="1.2"/><path d="M9 8.6H5.2L6.8 6.8" fill="none" stroke="#505050" stroke-width="1.2"/><circle cx="6.4" cy="4.6" r="1.2" fill="#505050"/></svg>
<div style="left:140px;top:68px;width:1.2px;height:11px;background:#777;"></div>
<svg style="left:147.5px;top:69.4px;" width="10" height="8" viewBox="0 0 10 8"><circle cx="3.6" cy="5" r="2.4" fill="#5a5a5a"/><circle cx="7.6" cy="3" r="1.5" fill="#5a5a5a"/><circle cx="2.6" cy="1.4" r="1" fill="#6c6c6c"/></svg>
<svg style="left:167.8px;top:70.6px;" width="7" height="4.6" viewBox="0 0 7 4.6"><path d="M0.7 0.6H6.3L3.5 3.8Z" fill="#f4f4f4" stroke="#555" stroke-width="1"/></svg>
<svg style="left:5.6px;top:85px;" width="5" height="6.4" viewBox="0 0 5 6.4"><path d="M0.6 0.8L4 3.2L0.6 5.6Z" fill="#fdfdfd" stroke="#a0a0a0" stroke-width="0.9"/></svg>
<svg style="left:14.5px;top:81.6px;" width="11" height="11" viewBox="0 0 11 11"><path d="M1 4.4H9V10H1Z" fill="#fafafa" stroke="#5a5a5a" stroke-width="1.1"/><path d="M2.2 4.2Q2.6 1 6 1.2Q9.4 1.6 9.6 4.6" fill="none" stroke="#666" stroke-width="1.2"/><path d="M2.4 8.4L7.6 5.6" stroke="#777" stroke-width="1"/><circle cx="8.6" cy="2.2" r="1.5" fill="#6e6e6e"/></svg>
<svg style="left:184.8px;top:53px;" width="8.8" height="10" viewBox="0 0 8.8 10"><path d="M1.6 0.8H6L7.8 2.6V9.2H1.6Z" fill="#fbfbfb" stroke="#4e4e4e" stroke-width="1.1"/><path d="M4.6 2.4V6.6Q4.4 8 3 7.4" fill="none" stroke="#4e4e4e" stroke-width="1.1"/><path d="M0.6 8.6L2.6 9.6" stroke="#444" stroke-width="1.2"/></svg>
<svg style="left:251.5px;top:53.1px;" width="8" height="8" viewBox="0 0 8 8"><path d="M1.3 0.4L4 3.1L6.7 0.4L7.6 1.3L4.9 4L7.6 6.7L6.7 7.6L4 4.9L1.3 7.6L0.4 6.7L3.1 4L0.4 1.3Z" fill="#f6f6f6" stroke="#4c4c4c" stroke-width="0.95" stroke-linejoin="round"/></svg>
<svg style="left:1127px;top:52.8px;" width="8" height="3.4" viewBox="0 0 8 3.4"><rect x="0.6" y="0.6" width="6.8" height="2.2" fill="#f8f8f8" stroke="#555" stroke-width="1"/></svg>
<svg style="left:1142.4px;top:52.8px;" width="8" height="8" viewBox="0 0 8 8"><rect x="0.6" y="0.6" width="6.8" height="6.6" fill="#f8f8f8" stroke="#555" stroke-width="1.1"/><rect x="0.6" y="0.4" width="6.8" height="2" fill="#555"/></svg>
<svg style="left:1137px;top:69.5px;" width="7" height="5" viewBox="0 0 7 5"><path d="M0.8 4.2L3.5 1.2L6.2 4.2" fill="none" stroke="#8c8c8c" stroke-width="1.3"/></svg>
<svg style="left:1137px;top:463.5px;" width="7" height="5" viewBox="0 0 7 5"><path d="M0.8 0.8L3.5 3.8L6.2 0.8" fill="none" stroke="#b8b8b8" stroke-width="1.3"/></svg>
<svg style="left:226px;top:474.5px;" width="5" height="7" viewBox="0 0 5 7"><path d="M4.2 0.8L1.2 3.5L4.2 6.2" fill="none" stroke="#bdbdbd" stroke-width="1.3"/></svg>
<svg style="left:1126.5px;top:474.5px;" width="5" height="7" viewBox="0 0 5 7"><path d="M0.8 0.8L3.8 3.5L0.8 6.2" fill="none" stroke="#c4c4c4" stroke-width="1.3"/></svg>
<svg style="left:183.8px;top:273.2px;" width="7.6" height="7.6" viewBox="0 0 7.6 7.6"><rect x="0.4" y="0.4" width="6.8" height="6.8" rx="1.6" fill="#7d3038"/><path d="M2.2 2.2L5.4 5.4M5.4 2.2L2.2 5.4" stroke="#f3dede" stroke-width="1.1"/></svg>
<svg style="left:183.6px;top:224.4px;" width="8" height="7.6" viewBox="0 0 8 7.6"><rect x="0.4" y="0.8" width="7" height="5.8" fill="#cfcfcf"/><path d="M2 2.4L5.6 5.4M5.6 2.4L2 5.4" stroke="#7a7a7a" stroke-width="1"/></svg>
<svg style="left:216.4px;top:200.4px;" width="5.4" height="5.4" viewBox="0 0 5.4 5.4"><circle cx="2.7" cy="2.7" r="2.2" fill="#eee" stroke="#b5b5b5" stroke-width="0.8"/><path d="M1.4 2.7H4" stroke="#aaa" stroke-width="0.8"/></svg>
<svg style="left:1145.6px;top:274px;" width="7" height="5.4" viewBox="0 0 7 5.4"><rect x="0.6" y="0.6" width="5.6" height="3.8" fill="#f8f8f8" stroke="#666" stroke-width="1"/></svg>
<svg style="left:634px;top:285.2px;" width="13" height="3" viewBox="0 0 13 3"><path d="M0 1.8L1.5 0.6L3 1.8L4.5 0.6L6 1.8L7.5 0.6L9 1.8L10.5 0.6L12 1.8" fill="none" stroke="#5e5252" stroke-width="0.9"/></svg>
<svg style="left:1163.2px;top:51.4px;" width="8.4" height="10.4" viewBox="0 0 8.4 10.4"><rect x="0.8" y="1.2" width="6.8" height="8.6" rx="1" fill="#5c5c5c"/><rect x="2.4" y="0.2" width="3.6" height="2" fill="#777"/><rect x="2.2" y="3.8" width="2.6" height="2.6" fill="#9c9c9c"/><path d="M2 8H6" stroke="#8c8c8c" stroke-width="0.9"/></svg>
<svg style="left:1210px;top:53.4px;" width="8" height="8" viewBox="0 0 8 8"><path d="M1.3 0.4L4 3.1L6.7 0.4L7.6 1.3L4.9 4L7.6 6.7L6.7 7.6L4 4.9L1.3 7.6L0.4 6.7L3.1 4L0.4 1.3Z" fill="#f6f6f6" stroke="#4c4c4c" stroke-width="0.95" stroke-linejoin="round"/></svg>
<svg style="left:1237.4px;top:52.8px;" width="8" height="3.4" viewBox="0 0 8 3.4"><rect x="0.6" y="0.6" width="6.8" height="2.2" fill="#f8f8f8" stroke="#555" stroke-width="1"/></svg>
<svg style="left:1252.8px;top:52.8px;" width="8" height="8" viewBox="0 0 8 8"><rect x="0.6" y="0.6" width="6.8" height="6.6" fill="#f8f8f8" stroke="#555" stroke-width="1.1"/><rect x="0.6" y="0.4" width="6.8" height="2" fill="#555"/></svg>
<svg style="left:1165.6px;top:68.2px;" width="8.6" height="10.2" viewBox="0 0 8.6 10.2"><rect x="0.8" y="2.6" width="6" height="6.8" fill="#f8f8f8" stroke="#5a5a5a" stroke-width="1.2"/><path d="M4.6 1.6H8.2M6.4 0V3.4" stroke="#666" stroke-width="1"/></svg>
<svg style="left:1179.0px;top:72.3px;" width="5" height="3" viewBox="0 0 5 3"><path d="M0 0H5L2.5 3Z" fill="#2a2a2a"/></svg>
<svg style="left:1194.6px;top:68.6px;" width="9" height="10" viewBox="0 0 9 10"><path d="M2 2H7M4.5 0.6V3.2" stroke="#4e6a8c" stroke-width="1.1"/><path d="M4.4 4V9M4.4 6H7M4.4 8.6H7" stroke="#44566e" stroke-width="1.1" fill="none"/></svg>
<svg style="left:1209.6px;top:68.4px;" width="10" height="10.4" viewBox="0 0 10 10.4"><circle cx="2.8" cy="2.8" r="2" fill="#f4f4f4" stroke="#505050" stroke-width="1.1"/><path d="M3 5V8.6H6" stroke="#505050" stroke-width="1.1" fill="none"/><circle cx="6.4" cy="5.6" r="1.3" fill="#505050"/><path d="M8.4 5V9" stroke="#777" stroke-width="1" stroke-dasharray="1 0.8"/></svg>
<svg style="left:1231.6px;top:69.6px;" width="9.6" height="9" viewBox="0 0 9.6 9"><circle cx="3" cy="5.4" r="2.5" fill="#5a5a5a"/><circle cx="6.8" cy="3.4" r="2" fill="#626262"/><circle cx="2.6" cy="1.6" r="1.2" fill="#6c6c6c"/></svg>
<svg style="left:1250.6px;top:68.6px;" width="11" height="10.4" viewBox="0 0 11 10.4"><path d="M0.8 0.8L10.2 9.6" stroke="#444" stroke-width="1.3"/><path d="M8.6 1.4L3 8.4" stroke="#555" stroke-width="1.1"/><ellipse cx="5.4" cy="5" rx="2.2" ry="1.4" transform="rotate(42 5.4 5)" fill="#555"/></svg>
<svg style="left:1167px;top:86.4px;" width="7.4" height="4.8" viewBox="0 0 7.4 4.8"><path d="M0.7 0.6H6.7L3.7 4Z" fill="#c8c8c8" stroke="#484848" stroke-width="1.1"/></svg>
<svg style="left:1194px;top:103.4px;" width="8.6" height="8.6" viewBox="0 0 8.6 8.6"><circle cx="3.2" cy="3.2" r="2.4" fill="#fff" stroke="#555" stroke-width="1.2"/><path d="M5 5L7.8 7.8" stroke="#555" stroke-width="1.5"/></svg>
<svg style="left:1214px;top:104.4px;" width="3.6" height="6.4" viewBox="0 0 3.6 6.4"><path d="M0.2 0.2L3.2 3.2L0.2 6.2Z" fill="#333"/></svg>
<svg style="left:1241px;top:104.4px;" width="3.6" height="6.4" viewBox="0 0 3.6 6.4"><path d="M0.2 0.2L3.2 3.2L0.2 6.2Z" fill="#333"/></svg>
<svg style="left:1164.6px;top:215.6px;" width="10.4" height="10.4" viewBox="0 0 10.4 10.4"><circle cx="5.2" cy="5.2" r="4.4" fill="#fafafa" stroke="#4c4c4c" stroke-width="1.1"/><path d="M5.2 4.4V7.8" stroke="#444" stroke-width="1.3"/><circle cx="5.2" cy="2.8" r="0.8" fill="#444"/></svg>
<svg style="left:1257.4px;top:217px;" width="8" height="8" viewBox="0 0 8 8"><path d="M1.3 0.4L4 3.1L6.7 0.4L7.6 1.3L4.9 4L7.6 6.7L6.7 7.6L4 4.9L1.3 7.6L0.4 6.7L3.1 4L0.4 1.3Z" fill="#f6f6f6" stroke="#666" stroke-width="0.95" stroke-linejoin="round"/></svg>
<svg style="left:1162px;top:272.4px;" width="9.6" height="9.6" viewBox="0 0 9.6 9.6"><path d="M0.6 1.6H3.2V4H0.6ZM0.6 6H3.2V8.6H0.6Z" fill="#f6f6f6" stroke="#505050" stroke-width="1"/><path d="M4.6 1.4H9.2M4.6 3.8H8M4.6 6.2H9.2M4.6 8.4H8" stroke="#505050" stroke-width="1.1"/></svg>
<svg style="left:1205.6px;top:273px;" width="8" height="8" viewBox="0 0 8 8"><path d="M1.3 0.4L4 3.1L6.7 0.4L7.6 1.3L4.9 4L7.6 6.7L6.7 7.6L4 4.9L1.3 7.6L0.4 6.7L3.1 4L0.4 1.3Z" fill="#f6f6f6" stroke="#4c4c4c" stroke-width="0.95" stroke-linejoin="round"/></svg>
<svg style="left:1237.6px;top:272.6px;" width="8" height="3.4" viewBox="0 0 8 3.4"><rect x="0.6" y="0.6" width="6.8" height="2.2" fill="#f8f8f8" stroke="#555" stroke-width="1"/></svg>
<svg style="left:1252.8px;top:272.6px;" width="8" height="8" viewBox="0 0 8 8"><rect x="0.6" y="0.6" width="6.8" height="6.6" fill="#f8f8f8" stroke="#555" stroke-width="1.1"/><rect x="0.6" y="0.4" width="6.8" height="2" fill="#555"/></svg>
<svg style="left:1164px;top:288.4px;" width="9.6" height="9.6" viewBox="0 0 9.6 9.6"><rect x="0.8" y="1.8" width="7.8" height="6.8" rx="1.4" fill="#f8f8f8" stroke="#666" stroke-width="1.1"/><path d="M0.8 5.2H8.6" stroke="#666" stroke-width="1.1"/><path d="M2.4 0.8H7" stroke="#888" stroke-width="0.9"/></svg>
<svg style="left:1178.6px;top:288.0px;" width="10" height="10.4" viewBox="0 0 10 10.4"><path d="M2 0.6V8.2M0.4 6.4L2 8.6L3.6 6.4" fill="none" stroke="#505050" stroke-width="1.1"/><path d="M5 1H7.6V4H5Z" fill="none" stroke="#505050" stroke-width="0.9"/><path d="M6 5.8H9V9.6H6Z" fill="#6a6a6a"/></svg>
<svg style="left:1194px;top:288.0px;" width="10.4" height="10.4" viewBox="0 0 10.4 10.4"><path d="M0.6 0.8L9.8 9.8" stroke="#444" stroke-width="1.2"/><rect x="3.2" y="2.2" width="5" height="5.4" rx="1" fill="#f2f2f2" stroke="#505050" stroke-width="1.1"/><path d="M3.4 4.8H8" stroke="#505050" stroke-width="0.9"/></svg>
<svg style="left:1210px;top:287.79999999999995px;" width="10.6" height="10.6" viewBox="0 0 10.6 10.6"><path d="M0.8 1.4L9.6 10" stroke="#444" stroke-width="1.2"/><circle cx="5" cy="5.6" r="2.3" fill="#5c5c5c"/><path d="M7.6 0.4V3.2M6.6 0.8H8.4" stroke="#555" stroke-width="0.9"/></svg>
<svg style="left:1226.6px;top:290.0px;" width="7" height="7" viewBox="0 0 7 7"><circle cx="3.5" cy="3.5" r="2.9" fill="#5e5e5e"/></svg>
<svg style="left:1240px;top:287.79999999999995px;" width="10.6" height="10.6" viewBox="0 0 10.6 10.6"><path d="M0.8 1.4L9.6 10" stroke="#444" stroke-width="1.2"/><circle cx="5" cy="5.6" r="2.1" fill="#5c5c5c"/><path d="M7.6 0.6V3.4" stroke="#555" stroke-width="0.9"/></svg>
<svg style="left:1261.4px;top:288.79999999999995px;" width="4" height="9" viewBox="0 0 4 9"><circle cx="2" cy="1.6" r="1.2" fill="#555"/><circle cx="2" cy="5.2" r="1.5" fill="#555"/><circle cx="2" cy="8" r="0.9" fill="#666"/></svg>
<svg style="left:1167px;top:305.4px;" width="7.4" height="4.8" viewBox="0 0 7.4 4.8"><path d="M0.7 0.6H6.7L3.7 4Z" fill="#b0b0b0" stroke="#484848" stroke-width="1.1"/></svg>
<svg style="left:1160.2px;top:319.6px;" width="8" height="8.6" viewBox="0 0 8 8.6"><path d="M0.4 0.8H7.2V7.8H0.4Z" fill="#505050"/><path d="M0.4 3.1H7.2M0.4 5.5H7.2" stroke="#bdbdbd" stroke-width="0.6"/><path d="M3.6 0.8V7.8" stroke="#9a9a9a" stroke-width="0.5"/></svg>
<svg style="left:1160px;top:330.4px;" width="10" height="11.4" viewBox="0 0 10 11.4"><path d="M1 1Q7.6 0 8 4.4Q7.6 8.4 2.6 7.4" fill="#f0f0f0" stroke="#444" stroke-width="1.7"/><path d="M2.6 4.2H6.4" stroke="#4a4a4a" stroke-width="1.4"/><path d="M3 7.4L0.8 10.8" stroke="#666" stroke-width="1"/></svg>
<svg style="left:1169.6px;top:336.4px;" width="4.6" height="5.6" viewBox="0 0 4.6 5.6"><path d="M0.5 0.6L3.8 2.8L0.5 5Z" fill="#6a6a6a"/></svg>
<svg style="left:1176.4px;top:343.6px;" width="9" height="9" viewBox="0 0 9 9"><circle cx="5" cy="4.4" r="2.7" fill="#6a6a6a"/><path d="M0.6 8.4L3 5.6" stroke="#666" stroke-width="1"/><path d="M0.4 8.4H2.6" stroke="#777" stroke-width="0.8"/></svg>
<span id="t69" class="t" style="left:1186.4px;top:341.2px;font-size:5px;line-height:7.0px;color:#555;font-weight:bold;">S</span>
<svg style="left:1163.6px;top:474.4px;" width="5.4" height="7.6" viewBox="0 0 5.4 7.6"><path d="M4.4 0.8L1.2 3.8L4.4 6.8" fill="none" stroke="#2e2e2e" stroke-width="1.5"/></svg>
<svg style="left:1257.4px;top:474.4px;" width="5.4" height="7.6" viewBox="0 0 5.4 7.6"><path d="M1 0.8L4.2 3.8L1 6.8" fill="none" stroke="#2e2e2e" stroke-width="1.5"/></svg>
<svg style="left:869.6px;top:297.4px;" width="7" height="5" viewBox="0 0 7 5"><path d="M0.8 4.2L3.5 1.2L6.2 4.2" fill="none" stroke="#3c3c3c" stroke-width="1.3"/></svg>
<svg style="left:869.6px;top:425px;" width="7" height="5" viewBox="0 0 7 5"><path d="M0.8 0.8L3.5 3.8L6.2 0.8" fill="none" stroke="#3c3c3c" stroke-width="1.3"/></svg>
<svg style="left:653.4px;top:434.6px;" width="5" height="7" viewBox="0 0 5 7"><path d="M4.2 0.8L1.2 3.5L4.2 6.2" fill="none" stroke="#3c3c3c" stroke-width="1.3"/></svg>
<svg style="left:858.8px;top:434.6px;" width="5" height="7" viewBox="0 0 5 7"><path d="M0.8 0.8L3.8 3.5L0.8 6.2" fill="none" stroke="#3c3c3c" stroke-width="1.3"/></svg>
<div style="left:870.6px;top:317.4px;width:5px;height:12.6px;background:linear-gradient(90deg,#3f74a8,#37506e);"></div>
<svg style="left:184.6px;top:491.6px;" width="9.6" height="10" viewBox="0 0 9.6 10"><rect x="0.8" y="0.8" width="7.6" height="8" fill="#f4f4f4" stroke="#777" stroke-width="1" stroke-dasharray="1.6 0.9"/><circle cx="3" cy="3" r="1.4" fill="#505050"/><path d="M5.4 3.6V7.6M2 7.6H4" stroke="#505050" stroke-width="1.1"/></svg>
<svg style="left:238.4px;top:493.4px;" width="8" height="6.6" viewBox="0 0 8 6.6"><ellipse cx="4" cy="3.3" rx="3.3" ry="2.7" fill="#f2f2f2" stroke="#555" stroke-width="1.2"/><path d="M2.4 3.2H5.6" stroke="#555" stroke-width="1.2"/></svg>
<svg style="left:284px;top:491.2px;" width="10" height="10.6" viewBox="0 0 10 10.6"><path d="M0.8 0.8H5L6.6 2.4V8.2H0.8Z" fill="#f8f8f8" stroke="#505050" stroke-width="1.1"/><circle cx="6" cy="6.6" r="2" fill="#f2f2f2" stroke="#444" stroke-width="1.1"/><path d="M7.4 8L9.4 10" stroke="#444" stroke-width="1.4"/><path d="M2.2 3H4.6M2.2 4.8H3.8" stroke="#777" stroke-width="0.8"/></svg>
<svg style="left:344px;top:492.2px;" width="9" height="8.6" viewBox="0 0 9 8.6"><rect x="0.7" y="0.7" width="7.6" height="6" rx="0.8" fill="#f2f2f2" stroke="#4e4e4e" stroke-width="1.3"/><rect x="2.4" y="2.2" width="3.2" height="2.4" fill="#666"/><path d="M2 8H7" stroke="#555" stroke-width="1"/></svg>
<svg style="left:389px;top:492.6px;" width="8" height="8" viewBox="0 0 8 8"><path d="M1.3 0.4L4 3.1L6.7 0.4L7.6 1.3L4.9 4L7.6 6.7L6.7 7.6L4 4.9L1.3 7.6L0.4 6.7L3.1 4L0.4 1.3Z" fill="#f6f6f6" stroke="#4c4c4c" stroke-width="0.95" stroke-linejoin="round"/></svg>
<svg style="left:1053px;top:493.6px;" width="8" height="6" viewBox="0 0 8 6"><rect x="0.2" y="0.2" width="7.4" height="5.6" rx="1.6" fill="#6c6c6c"/></svg>
<svg style="left:1068px;top:491.8px;" width="9.6" height="9.6" viewBox="0 0 9.6 9.6"><path d="M1.4 1.4L8.2 8.2M8.2 1.4L1.4 8.2" stroke="#555" stroke-width="2.6"/></svg>
<svg style="left:1082.6px;top:490.6px;" width="7.4" height="7.4" viewBox="0 0 7.4 7.4"><path d="M1.4 1.4L6.0 6.0M6.0 1.4L1.4 6.0" stroke="#555" stroke-width="2.6"/></svg>
<svg style="left:1086.4px;top:494.6px;" width="7.4" height="7.4" viewBox="0 0 7.4 7.4"><path d="M1.4 1.4L6.0 6.0M6.0 1.4L1.4 6.0" stroke="#555" stroke-width="2.6"/></svg>
<svg style="left:1103px;top:491.4px;" width="10.6" height="10.6" viewBox="0 0 10.6 10.6"><path d="M1 0.8H5.6L7.2 2.4V8.6H1Z" fill="#e8e8e8" stroke="#b0b0b0" stroke-width="1"/><path d="M6.2 6.4L9.6 9.8M9.6 6.4L6.2 9.8" stroke="#a0a0a0" stroke-width="1.3"/></svg>
<svg style="left:1118px;top:491.4px;" width="10.6" height="10.4" viewBox="0 0 10.6 10.4"><path d="M0.8 9.4V1H6V6H3.6V9.4Z" fill="#f2f2f2" stroke="#5a5a5a" stroke-width="1.2"/><path d="M7.6 1V9.4M9.6 1V9.4" stroke="#666" stroke-width="1"/><path d="M0.6 9.6H10" stroke="#555" stroke-width="1"/></svg>
<svg style="left:1134.6px;top:491.4px;" width="11" height="10.4" viewBox="0 0 11 10.4"><rect x="1.6" y="0.8" width="7.6" height="5.4" fill="#e4eefb" stroke="#4c5f7a" stroke-width="1"/><path d="M1 9.6Q1.4 6.4 3.6 7.4L6.8 8.4" fill="none" stroke="#44566c" stroke-width="1.3"/><circle cx="2.4" cy="7.4" r="1.3" fill="#50627a"/></svg>
<svg style="left:1149.4px;top:491.4px;" width="11" height="10.4" viewBox="0 0 11 10.4"><rect x="3" y="0.8" width="6.4" height="4.8" fill="#77839a" stroke="#4c5f7a" stroke-width="1"/><path d="M1 9.6Q1.4 6.4 3.6 7.4L8 8.2" fill="none" stroke="#44566c" stroke-width="1.3"/><circle cx="2.6" cy="6.6" r="1.5" fill="#50627a"/></svg>
<div style="left:1164px;top:490px;width:1px;height:12px;background:#8a8a8a;"></div>
<svg style="left:1170.6px;top:491.4px;" width="10.6" height="10" viewBox="0 0 10.6 10"><rect x="0.8" y="3.4" width="7.8" height="5.8" fill="#f6f6f6" stroke="#4e4e4e" stroke-width="1.3"/><path d="M4.4 4.4L9.4 0.8" stroke="#3e5c48" stroke-width="2.2"/></svg>
<svg style="left:1186.8px;top:490.6px;" width="9.6" height="9.6" viewBox="0 0 9.6 9.6"><rect x="0.8" y="0.8" width="8" height="7.4" rx="1" fill="#f2f2f2" stroke="#4e4e4e" stroke-width="1.4"/><rect x="2.8" y="2.6" width="4" height="3" fill="#5c5c5c"/><rect x="0.8" y="0.6" width="8" height="1.8" fill="#555"/></svg>
<svg style="left:1201.3px;top:495.2px;" width="4.6" height="2.8" viewBox="0 0 4.6 2.8"><path d="M0 0H4.6L2.3 2.8Z" fill="#555"/></svg>
<svg style="left:1211.6px;top:491.4px;" width="10.8" height="10" viewBox="0 0 10.8 10"><rect x="0.8" y="3" width="8.2" height="6.2" fill="#f8f8f8" stroke="#4e4e4e" stroke-width="1.3"/><path d="M6.6 1.6H10.4M8.6 0V3.4" stroke="#6b6b52" stroke-width="1.1"/></svg>
<svg style="left:1226.7px;top:495.1px;" width="5" height="3" viewBox="0 0 5 3"><path d="M0 0H5L2.5 3Z" fill="#2a2a2a"/></svg>
<svg style="left:1237.6px;top:492.4px;" width="8" height="3.4" viewBox="0 0 8 3.4"><rect x="0.6" y="0.6" width="6.8" height="2.2" fill="#f8f8f8" stroke="#555" stroke-width="1"/></svg>
<svg style="left:1252.8px;top:492.4px;" width="8" height="8" viewBox="0 0 8 8"><rect x="0.6" y="0.6" width="6.8" height="6.6" fill="#f8f8f8" stroke="#555" stroke-width="1.1"/><rect x="0.6" y="0.4" width="6.8" height="2" fill="#555"/></svg>
<svg style="left:1255.8px;top:521px;" width="7" height="5" viewBox="0 0 7 5"><path d="M0.8 4.2L3.5 1.2L6.2 4.2" fill="none" stroke="#8c8c8c" stroke-width="1.3"/></svg>
<svg style="left:1255.8px;top:656px;" width="7" height="5" viewBox="0 0 7 5"><path d="M0.8 0.8L3.5 3.8L6.2 0.8" fill="none" stroke="#8c8c8c" stroke-width="1.3"/></svg>
<svg style="left:185.6px;top:667px;" width="5" height="7" viewBox="0 0 5 7"><path d="M4.2 0.8L1.2 3.5L4.2 6.2" fill="none" stroke="#b4b4b4" stroke-width="1.3"/></svg>
<svg style="left:1245.6px;top:667px;" width="5" height="7" viewBox="0 0 5 7"><path d="M0.8 0.8L3.8 3.5L0.8 6.2" fill="none" stroke="#9a9a9a" stroke-width="1.3"/></svg>
<svg style="left:1270.6px;top:51.6px;" width="8" height="7" viewBox="0 0 8 7"><path d="M2.4 0.8H7.2L5.6 6H0.8Z" fill="#f2f2f2" stroke="#555" stroke-width="1.2"/><path d="M2 3.4H6.4" stroke="#555" stroke-width="0.9"/></svg>
<svg style="left:1269.6px;top:65.4px;" width="10.4" height="10.6" viewBox="0 0 10.4 10.6"><circle cx="5.4" cy="5.3" r="4.6" fill="#f4f4f4" stroke="#4e4e4e" stroke-width="1.3"/><circle cx="3.8" cy="4" r="1.4" fill="#666"/><circle cx="7" cy="4.4" r="1.3" fill="#666"/><circle cx="5.2" cy="7.2" r="1.4" fill="#666"/></svg>
<svg style="left:1266.6px;top:681.4px;" width="11" height="9.4" viewBox="0 0 11 9.4"><rect x="0.6" y="0.8" width="6.6" height="5" fill="#6a6a6a"/><rect x="3.2" y="3" width="7" height="5.6" fill="#f0f0f0" stroke="#5a5a5a" stroke-width="1.1"/></svg>
<svg style="left:6px;top:699.6px;" width="17.6" height="17.4" viewBox="0 0 17.6 17.4"><path d="M0 2.6L7.6 1.4V8.2H0ZM8.8 1.2L17.6 0V8.2H8.8ZM0 9.4H7.6V16L0 14.8ZM8.8 9.4H17.6V17.4L8.8 16.2Z" fill="#fff"/></svg>
<svg style="left:41px;top:696.4px;" width="22" height="22" viewBox="0 0 22 22"><path d="M3 18Q-1 12 8 5Q15 0 20 2" fill="none" stroke="#d9b83a" stroke-width="1.6"/><circle cx="11.4" cy="12" r="6.8" fill="none" stroke="#56b4ee" stroke-width="3.4"/><rect x="6" y="10.6" width="12" height="2.8" fill="#56b4ee"/><rect x="12.4" y="13.4" width="8" height="3.4" fill="#34497c"/></svg>
<svg style="left:83px;top:699.4px;" width="21.4" height="18.8" viewBox="0 0 21.4 18.8"><path d="M0.6 2.4H7L8.6 4.4H20.6V17.8H0.6Z" fill="#ecd992"/><rect x="0.6" y="6" width="20" height="6" fill="#f4e9b4"/><rect x="2.6" y="11.4" width="16" height="5" fill="#7fa8d8"/><rect x="5" y="13" width="11" height="2" fill="#d8e4f2"/><rect x="3" y="16.8" width="15.4" height="1.6" fill="#c9c4ae"/></svg>
<svg style="left:125.2px;top:697.6px;" width="19.8" height="21.6" viewBox="0 0 19.8 21.6"><rect width="19.8" height="21.6" fill="#1c7a34"/><path d="M4 8.4L14.6 6.6V16.8L4 15Z" fill="#f4f4f4"/><path d="M6.6 7.4Q7 3.8 9.6 4Q12 4.4 12 6.6" fill="none" stroke="#f4f4f4" stroke-width="1.1"/><rect x="6.8" y="9.6" width="4.6" height="4.4" fill="#2b8a44"/></svg>
<svg style="left:165.8px;top:697.8px;" width="21.6" height="21.4" viewBox="0 0 21.6 21.4"><rect width="21.6" height="21.4" rx="3.6" fill="#fcfcfc"/><path d="M4 16.4Q10.8 20.4 18 15.6" fill="none" stroke="#e39a2d" stroke-width="1.5"/></svg>
<span id="t70" class="t" style="left:170.6px;top:695.4px;font-size:19.5px;line-height:20px;color:#141414;font-weight:bold;">a</span>
<div style="left:199px;top:697px;width:1px;height:22px;background:#5a6a92;"></div>
<div style="left:240.4px;top:697px;width:1px;height:22px;background:#5a6a92;"></div>
<div style="left:280.6px;top:697px;width:1px;height:22px;background:#5a6a92;"></div>
<svg style="left:207px;top:697.2px;" width="22" height="22.8" viewBox="0 0 22 22.8"><rect x="0.6" y="0.6" width="20.8" height="22" fill="#5d6b8c" stroke="#d4d9e4" stroke-width="1.1"/><path d="M3.4 5.4H13.6V8L18.6 5V15L13.6 12.4V15.4H3.4Z" fill="#fbfbfb"/><path d="M4 17.4H12" stroke="#d0d4dc" stroke-width="1.2"/></svg>
<svg style="left:249.6px;top:698.4px;" width="19.6" height="19.6" viewBox="0 0 19.6 19.6"><circle cx="9.8" cy="9.8" r="9.4" fill="#e0742a"/><circle cx="10.6" cy="8.2" r="6" fill="#3f7dc4"/><path d="M1.4 7Q3 14 9.6 13.6Q15 13 16.6 8.6Q19 14 14 17.6Q8 20.4 3 16.4Q0 12.6 1.4 7Z" fill="#e2692a"/><path d="M13 2.4Q17.6 4.4 18 9.4" fill="none" stroke="#f4d34a" stroke-width="1.7"/><circle cx="9.6" cy="6.4" r="2.2" fill="#7ab4e2"/></svg>
<svg style="left:292.4px;top:699px;" width="19.2" height="19.2" viewBox="0 0 19.2 19.2"><circle cx="9.6" cy="9.6" r="9.2" fill="#4c9a52"/><path d="M9.6 9.6L1.7 4.9A9.2 9.2 0 0 1 17.5 4.9Z" fill="#d4493a"/><path d="M9.6 9.6L17.5 4.9A9.2 9.2 0 0 1 9.8 18.8Z" fill="#ecc93c"/><circle cx="9.6" cy="9.6" r="4.3" fill="#e9eef4"/><circle cx="9.6" cy="9.6" r="3.3" fill="#4a7fc8"/></svg>
<div style="left:323px;top:695.4px;width:39.2px;height:24.6px;background:#6e7890;border:1px solid #a3aaba;border-bottom:none;box-sizing:border-box;"></div>
<svg style="left:332.4px;top:698.6px;" width="20" height="19.4" viewBox="0 0 20 19.4"><circle cx="9.4" cy="9.6" r="9.2" fill="#e3a24a"/><circle cx="10.6" cy="9.6" r="9" fill="#23244c"/><rect x="3" y="6" width="15.6" height="1.7" fill="#f2f2f6"/><rect x="2.2" y="8.8" width="16.8" height="1.7" fill="#f2f2f6"/><rect x="3" y="11.6" width="15.6" height="1.7" fill="#f2f2f6"/></svg>
<svg style="left:1099px;top:703px;" width="20.4" height="11.4" viewBox="0 0 20.4 11.4"><rect x="0.7" y="0.7" width="19" height="10" rx="1.6" fill="none" stroke="#eef1f7" stroke-width="1.3"/><path d="M3 3.6H17.4M3 5.8H17.4" stroke="#eef1f7" stroke-width="1.2" stroke-dasharray="1.5 0.9"/><path d="M5 8.2H15.4" stroke="#eef1f7" stroke-width="1.2"/></svg>
<svg style="left:1128.6px;top:707px;" width="6" height="4" viewBox="0 0 6 4"><path d="M0 3.6L3 0.4L6 3.6Z" fill="#eef1f7"/></svg>
<svg style="left:1143.6px;top:703.6px;" width="9.6" height="10.4" viewBox="0 0 9.6 10.4"><path d="M1 0.4V10.4" stroke="#cfd5e2" stroke-width="1.1"/><path d="M1.6 1H4.6V2.2H8.8L7.4 4.2L8.8 6.2H4.4V5H1.6Z" fill="#eef1f7"/></svg>
<svg style="left:1159.4px;top:705px;" width="9" height="8.6" viewBox="0 0 9 8.6"><rect x="0.4" y="6" width="1.6" height="2.4" fill="#9aa6c0"/><rect x="2.8" y="4.4" width="1.6" height="4" fill="#c8d0e0"/><rect x="5.2" y="2.4" width="1.6" height="6" fill="#e4e8f0"/><rect x="7.4" y="0.4" width="1.4" height="8" fill="#8793b0"/></svg>
<svg style="left:1173.6px;top:702.6px;" width="11.4" height="12" viewBox="0 0 11.4 12"><rect x="4.6" y="2" width="6" height="9.4" rx="0.8" fill="none" stroke="#eef1f7" stroke-width="1.3"/><rect x="6.2" y="0.6" width="2.8" height="1.6" fill="#eef1f7"/><rect x="6" y="5.4" width="3.2" height="5" fill="#eef1f7"/><path d="M0.4 4.6H3.8M2.2 2.8V6.4" stroke="#eef1f7" stroke-width="1.2"/></svg>
<svg style="left:1190.6px;top:703.6px;" width="10.4" height="10.4" viewBox="0 0 10.4 10.4"><path d="M0.6 3.6H2.6L5.4 0.8V9.6L2.6 6.8H0.6Z" fill="#eef1f7"/><path d="M7 2.6Q8.8 5.2 7 7.8" fill="none" stroke="#b8c0d4" stroke-width="1.1"/><path d="M8.6 1.2Q11 5.2 8.6 9.2" fill="none" stroke="#8e99b6" stroke-width="1"/></svg>
</div>
</body>
</html>
